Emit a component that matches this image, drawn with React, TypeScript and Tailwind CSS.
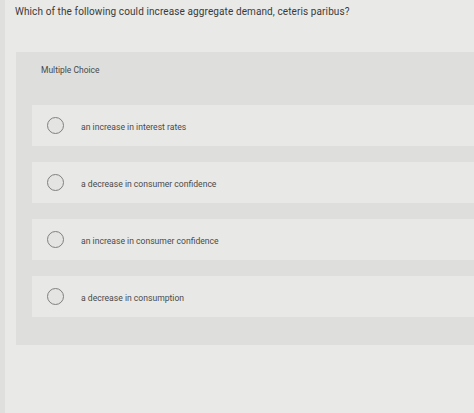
import React from "react";

const options = [
  "an increase in interest rates",
  "a decrease in consumer confidence",
  "an increase in consumer confidence",
  "a decrease in consumption",
];

export default function App() {
  return (
    <div
      className="w-[474px] h-[413px] bg-[#e9e9e7] overflow-hidden flex"
      style={{ fontFamily: "Roboto, 'Open Sans', sans-serif" }}
    >
      <div className="w-[5px] h-full bg-[#dfdfdd]" />
      <div className="flex-1 flex flex-col">
        <div className="pl-[10px] pt-[4px] h-[52px] text-[10px] tracking-[0.1px] text-[#3a3a3a]">
          Which of the following could increase aggregate demand, ceteris paribus?
        </div>
        <div className="ml-[11px] h-[293px] bg-[#dededc] flex flex-col">
          <div className="h-[33px] pl-[25px] pt-[12px] text-[8.5px] text-[#4a4a4a]">
            Multiple Choice
          </div>
          <div className="flex flex-col gap-[16px] pt-[20px] pl-[16px]">
            {options.map((o) => (
              <div
                key={o}
                className="h-[41px] bg-[#e8e8e6] flex items-center pl-[15px]"
              >
                <div className="w-[17px] h-[17px] rounded-full border border-[#808080] bg-[#e4e4e2]" />
                <span className="ml-[17px] mt-[4px] text-[8.6px] text-[#4a4a4a]">{o}</span>
              </div>
            ))}
          </div>
        </div>
      </div>
    </div>
  );
}
